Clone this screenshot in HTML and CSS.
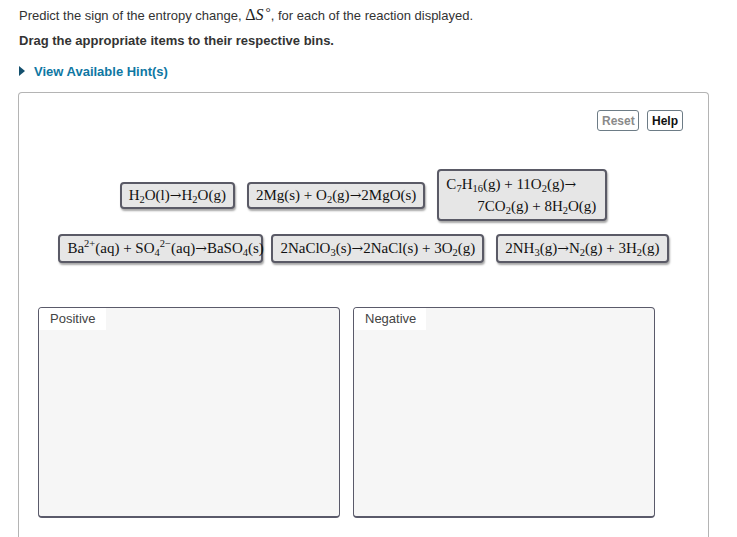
FILE: index.html
```html
<!DOCTYPE html>
<html>
<head>
<meta charset="utf-8">
<link rel="stylesheet" href="styles.css">
</head>
<body>
<div class="page">
  <p class="prompt">Predict the sign of the entropy change, <span class="m">Δ<i>S</i><sup>°</sup></span>, for each of the reaction displayed.</p>
  <p class="instr">Drag the appropriate items to their respective bins.</p>
  <div class="hint"><span class="tri"></span><span class="hint-text">View Available Hint(s)</span></div>

  <div class="panel">
    <div class="toolbar">
      <button class="btn reset">Reset</button>
      <button class="btn help">Help</button>
    </div>

    <div class="chips">
      <div class="row row1">
        <div class="chip">H<sub>2</sub>O(l)<span class="ar">→</span>H<sub>2</sub>O(g)</div>
        <div class="chip">2Mg(s) + O<sub>2</sub>(g)<span class="ar">→</span>2MgO(s)</div>
        <div class="chip two">
          <span class="l1">C<sub>7</sub>H<sub>16</sub>(g) + 11O<sub>2</sub>(g)<span class="ar">→</span></span>
          <span class="l2">7CO<sub>2</sub>(g) + 8H<sub>2</sub>O(g)</span>
        </div>
      </div>
      <div class="row row2">
        <div class="chip ba">Ba<sup>2+</sup>(aq) + SO<sub>4</sub><sup class="after">2−</sup>(aq)<span class="ar">→</span>BaSO<sub>4</sub>(s)</div>
        <div class="chip">2NaClO<sub>3</sub>(s)<span class="ar">→</span>2NaCl(s) + 3O<sub>2</sub>(g)</div>
        <div class="chip">2NH<sub>3</sub>(g)<span class="ar">→</span>N<sub>2</sub>(g) + 3H<sub>2</sub>(g)</div>
      </div>
    </div>

    <div class="bins">
      <div class="bin"><div class="bin-label">Positive</div></div>
      <div class="bin"><div class="bin-label">Negative</div></div>
    </div>
  </div>
</div>
</body>
</html>
```
FILE: styles.css
```css
html, body {
  margin: 0;
  padding: 0;
  background: #ffffff;
  overflow: hidden;
}

.page {
  padding: 6px 28px 0 19px;
  font-family: "Liberation Sans", Arial, sans-serif;
  font-size: 13px;
  color: #333333;
}

.prompt {
  margin: 0;
  line-height: 18px;
}

.m {
  font-family: "Liberation Serif", "DejaVu Serif", serif;
  font-size: 16px;
  color: #222;
}
.m sup {
  font-size: 13px;
  vertical-align: 4px;
  line-height: 0;
  margin-left: 2px;
}

.instr {
  margin: 8px 0 0 0;
  font-weight: bold;
  line-height: 16px;
}

.hint {
  margin-top: 14px;
  display: flex;
  align-items: center;
  height: 16px;
}
.tri {
  width: 0;
  height: 0;
  border-left: 6px solid #14506e;
  border-top: 5px solid transparent;
  border-bottom: 5px solid transparent;
  margin-right: 9px;
}
.hint-text {
  color: #0e77a3;
  font-weight: bold;
}

.panel {
  margin-top: 13px;
  margin-left: -1px;
  border: 1px solid #b4b4b4;
  border-bottom: none;
  border-radius: 4px 4px 0 0;
  height: 440px;
  padding: 17px 25px 0 19px;
}

.toolbar {
  display: flex;
  justify-content: flex-end;
  gap: 8px;
  height: 21px;
}
.btn {
  font-family: "Liberation Sans", Arial, sans-serif;
  font-size: 12px;
  font-weight: bold;
  background: #ffffff;
  border: 1px solid #6d7c86;
  border-radius: 3px;
  padding: 0 4px;
  height: 21px;
  line-height: 18px;
}
.reset {
  color: #8a8a8a;
  width: 42px;
}
.help {
  color: #111;
  width: 36px;
}

.chips {
  margin-top: 39px;
  margin-left: -19px;
  margin-right: -25px;
  display: flex;
  flex-direction: column;
  gap: 12px;
}
.row {
  display: flex;
  justify-content: center;
  align-items: center;
}
.row1 {
  gap: 12px;
  height: 50px;
}
.row2 {
  gap: 12px;
  height: 32px;
}

.chip {
  font-family: "Liberation Serif", "DejaVu Serif", serif;
  font-size: 15px;
  color: #111;
  background: #e6e6e6;
  border: 2px solid #5a5a66;
  border-radius: 4px;
  box-shadow: 1px 2px 2px rgba(0, 0, 0, 0.35);
  padding: 1px 7px;
  line-height: 21px;
  white-space: nowrap;
}
.row2 .chip {
  padding: 2px 7px;
}
.chip .ar {
  font-family: "DejaVu Serif", serif;
  font-size: 14px;
}
.chip sub, .chip sup {
  font-size: 10.5px;
  line-height: 0;
}
.chip sub {
  vertical-align: -3px;
}
.chip sup {
  vertical-align: 6px;
}
.chip.two {
  display: flex;
  flex-direction: column;
  padding: 2px 9px 2px 7px;
  line-height: 22px;
}
.chip.two .l2 {
  padding-left: 31px;
}
.chip.ba {
  width: 205px;
  box-sizing: border-box;
  margin-right: -4px;
  overflow: visible;
}

.bins {
  margin-top: 43px;
  display: flex;
  gap: 13px;
}
.bin {
  width: 302px;
  height: 211px;
  box-sizing: border-box;
  background: #f6f6f6;
  border: 1px solid #5a5a6a;
  border-bottom-width: 2px;
  border-radius: 4px;
}
.bin-label {
  display: inline-block;
  background: #ffffff;
  color: #444;
  font-size: 13px;
  padding: 3px 10px 4px 11px;
  border-top-left-radius: 3px;
}
```
